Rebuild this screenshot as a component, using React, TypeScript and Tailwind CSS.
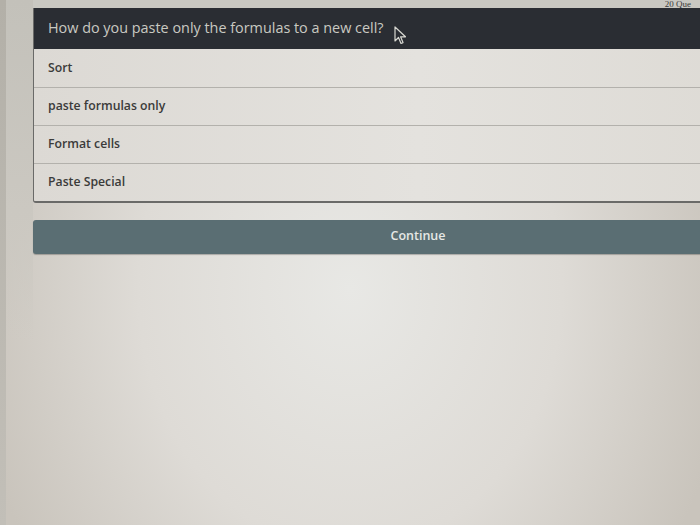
import React from "react";

const options = ["Sort", "paste formulas only", "Format cells", "Paste Special"];

function Cursor() {
  return (
    <svg width="13" height="19" viewBox="0 0 13 19" className="ml-[10px] mt-[8px]">
      <path
        d="M1 1 L1 15 L4.5 11.5 L7 17.5 L9 16.6 L6.6 10.8 L11.5 10.8 Z"
        fill="#2a2d33"
        stroke="#d8d8d2"
        strokeWidth="1.2"
        strokeLinejoin="round"
      />
    </svg>
  );
}

export default function App() {
  return (
    <div
      className="w-[700px] h-[525px] overflow-hidden bg-[radial-gradient(ellipse_55%_90%_at_50%_55%,#e8e8e5_0%,#dedbd6_55%,#c9c4bc_100%)]"
      style={{ fontFamily: '"Open Sans", "DejaVu Sans", sans-serif' }}
    >
      <div className="flex h-full">
        {/* left bezel shade */}
        <div className="w-[6px] shrink-0 bg-[linear-gradient(to_bottom,#b3b0a8_0%,#c2bfb8_100%)]" />
        <div className="w-[27px] shrink-0 bg-[linear-gradient(to_bottom,#c3c1ba_0%,#cbc8c1_40%,rgba(203,200,193,0)_65%)]" />

        <div className="w-[770px] shrink-0 flex flex-col">
          {/* top strip */}
          <div className="h-[8px] overflow-hidden flex justify-end items-end pr-[112px] bg-[#c9c8c2]">
            <span className="text-[9px] leading-[8px] text-[#3a3a3a]" style={{ fontFamily: '"Liberation Serif", serif' }}>
              20 Que
            </span>
          </div>

          {/* question card */}
          <div className="rounded-bl-[3px] border-l border-b-2 border-[#6a6a68] overflow-hidden">
            <div className="h-[41px] bg-[#2a2d33] flex items-start pl-[14px] pt-[10px]">
              <span className="text-[14.4px] leading-[19px] text-[#c9c9c2]">
                How do you paste only the formulas to a new cell?
              </span>
              <Cursor />
            </div>
            {options.map((o, i) => (
              <div
                key={o}
                className={`h-[38px] flex items-center pl-[14px] bg-[linear-gradient(to_right,#dcd9d4_0%,#e4e2de_50%,#dcd9d3_100%)] ${
                  i > 0 ? "border-t border-[#b3b1ac]" : ""
                }`}
              >
                <span className="text-[12.25px] font-semibold text-[#3b3b3a]">{o}</span>
              </div>
            ))}
          </div>

          {/* continue */}
          <div className="mt-[17px] h-[34px] rounded-l-[3px] bg-[#5a6e73] flex items-center justify-center shadow-[0_1px_1px_rgba(0,0,0,0.25)]">
            <span className="text-[12.5px] font-semibold text-[#e6e8e6] -mt-[2px]">Continue</span>
          </div>
        </div>
      </div>
    </div>
  );
}
